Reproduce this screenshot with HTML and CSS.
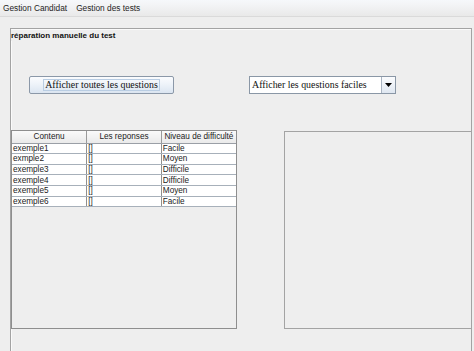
FILE: index.html
```html
<!DOCTYPE html>
<html lang="fr">
<head>
<meta charset="utf-8">
<title>Gestion des tests</title>
<link rel="stylesheet" href="styles.css">
</head>
<body>
<div class="window">
  <div class="menubar">
    <span class="menu">Gestion Candidat</span>
    <span class="menu">Gestion des tests</span>
  </div>
  <div class="frame">
    <div class="frame-title">réparation manuelle du test</div>
    <div class="controls">
      <button class="btn"><span class="focus">Afficher toutes les questions</span></button>
      <div class="combo">
        <span class="combo-text">Afficher les questions faciles</span>
        <span class="combo-arrow"><svg width="7" height="4" viewBox="0 0 7 4"><path d="M0 0h7L3.5 4z" fill="#000"/></svg></span>
      </div>
    </div>
    <div class="lower">
      <div class="table-pane">
        <table class="grid">
          <thead>
            <tr><th>Contenu</th><th>Les reponses</th><th>Niveau de difficulté</th></tr>
          </thead>
          <tbody>
            <tr><td>exemple1</td><td>[]</td><td>Facile</td></tr>
            <tr><td>exmple2</td><td>[]</td><td>Moyen</td></tr>
            <tr><td>exemple3</td><td>[]</td><td>Difficile</td></tr>
            <tr><td>exemple4</td><td>[]</td><td>Difficile</td></tr>
            <tr><td>exemple5</td><td>[]</td><td>Moyen</td></tr>
            <tr><td>exemple6</td><td>[]</td><td>Facile</td></tr>
          </tbody>
        </table>
      </div>
      <div class="side-panel"></div>
    </div>
  </div>
</div>
</body>
</html>
```

FILE: styles.css
```css
* { box-sizing: border-box; }
html, body {
  margin: 0;
  padding: 0;
  background: #eeeeee;
}
.window {
  width: 474px;
  height: 351px;
  overflow: hidden;
  background: #eeeeee;
  font-family: "Liberation Sans", Arial, sans-serif;
}
.menubar {
  height: 17px;
  display: flex;
  align-items: center;
  padding-left: 3px;
  gap: 9px;
  background: linear-gradient(#f6f8fb 0%, #f3f4f6 30%, #e9e9e9 100%);
  border-bottom: 1px solid #dadada;
  font-size: 8.3px;
  color: #1e1e1e;
}
.menu { line-height: 12px; padding-bottom: 1px; }
.frame {
  position: relative;
  margin: 11px 2px 0 10px;
  height: 340px;
  border-top: 1px solid #a3a3a3;
  border-left: 1px solid #a3a3a3;
  border-right: 1px solid #a3a3a3;
  box-shadow: inset 1px 1px 0 #fafafa;
}
.frame-title {
  position: absolute;
  top: 1px;
  left: 0px;
  padding-right: 2px;
  background: #eeeeee;
  font-size: 8px;
  font-weight: bold;
  line-height: 11px;
  color: #111;
  white-space: nowrap;
}
.controls {
  display: flex;
  padding-top: 47px;
  height: 65px;
}
.btn {
  margin: 0 0 0 18px;
  width: 145px;
  height: 18px;
  padding: 0;
  border: 1px solid #8b98a8;
  border-radius: 2px;
  background: linear-gradient(#fbfcfe 0%, #eef3f9 45%, #dbe5f1 100%);
  display: flex;
  align-items: center;
  justify-content: center;
  font-family: "Liberation Serif", "Times New Roman", serif;
  font-size: 9.9px;
  color: #111;
}
.focus {
  border: 1px solid #b9cde3;
  padding: 0 1px;
  line-height: 10px;
}
.combo {
  margin-left: 75px;
  width: 147px;
  height: 18px;
  display: flex;
  border: 1px solid #8a97a6;
  background: #ffffff;
}
.combo-text {
  flex: 1;
  padding-left: 2px;
  font-family: "Liberation Serif", "Times New Roman", serif;
  font-size: 9.9px;
  line-height: 16px;
  color: #111;
  white-space: nowrap;
}
.combo-arrow {
  width: 14px;
  display: flex;
  align-items: center;
  justify-content: center;
  border-left: 1px solid #a9b4c2;
  background: linear-gradient(#fbfcfe, #dfe7f1);
}
.lower {
  display: flex;
  align-items: flex-start;
  margin-top: 36px;
}
.table-pane {
  width: 226px;
  height: 199px;
  border: 1px solid #8e8e8e;
  background: #eeeeee;
}
.grid {
  border-collapse: collapse;
  width: 224px;
  table-layout: fixed;
  font-size: 8.2px;
  color: #222;
}
.grid th {
  height: 12px;
  font-weight: normal;
  text-align: center;
  background: linear-gradient(#fafafa, #eaeaea);
  border-right: 1px solid #9a9a9a;
  border-bottom: 1px solid #9a9fa6;
  padding: 0;
  line-height: 11px;
  white-space: nowrap;
  overflow: hidden;
}
.grid th:last-child { border-right: none; }
.grid td {
  height: 10.67px;
  background: #ffffff;
  border-right: 1px solid #8f8f8f;
  border-bottom: 1px solid #a7b0ba;
  padding: 0 0 0 1px;
  line-height: 9.6px;
  vertical-align: middle;
  white-space: nowrap;
}
.grid td:last-child { border-right: none; }
.side-panel {
  margin-left: 47px;
  margin-top: 1px;
  flex: 1;
  height: 198px;
  border-top: 1px solid #a3a3a3;
  border-left: 1px solid #a3a3a3;
  border-bottom: 1px solid #a3a3a3;
  background: #eeeeee;
}
```
